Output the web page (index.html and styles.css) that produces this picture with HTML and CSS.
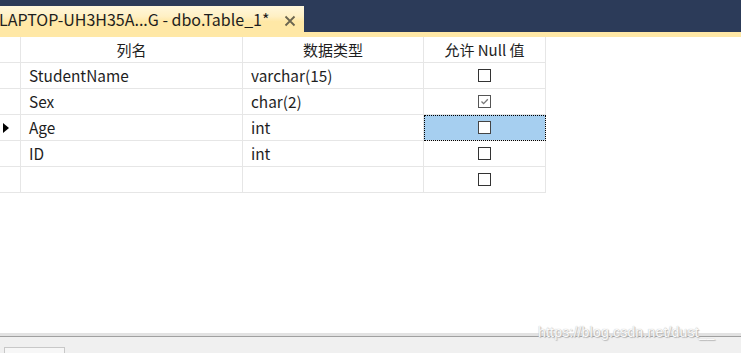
FILE: index.html
```html
<!DOCTYPE html>
<html>
<head>
<meta charset="utf-8">
<link rel="stylesheet" href="styles.css">
</head>
<body>
<div class="app">
  <div class="topbar">
    <div class="tab">
      <span class="tab-title">LAPTOP-UH3H35A...G - dbo.Table_1*</span>
      <svg class="close" width="12" height="12" viewBox="0 0 12 12"><path d="M1.5 1.5 L10.5 10.5 M10.5 1.5 L1.5 10.5" stroke="#6b6550" stroke-width="1.8" fill="none"/></svg>
    </div>
  </div>
  <div class="strip"></div>
  <div class="content">
    <div class="grid">
      <div class="rh hdr"></div><div class="c hdr name">列名</div><div class="c hdr type">数据类型</div><div class="c hdr nul">允许 Null 值</div>
      <div class="rh"></div><div class="c">StudentName</div><div class="c">varchar(15)</div><div class="c chk"><span class="box"></span></div>
      <div class="rh"></div><div class="c">Sex</div><div class="c">char(2)</div><div class="c chk"><span class="box checked"><svg width="11" height="11" viewBox="0 0 11 11"><path d="M2.5 5.5 L4.6 7.6 L8.8 3.2" stroke="#777" stroke-width="1.3" fill="none"/></svg></span></div>
      <div class="rh cur"><span class="arrow"></span></div><div class="c">Age</div><div class="c">int</div><div class="c chk sel"><span class="box"></span></div>
      <div class="rh"></div><div class="c">ID</div><div class="c">int</div><div class="c chk"><span class="box"></span></div>
      <div class="rh"></div><div class="c"></div><div class="c"></div><div class="c chk"><span class="box"></span></div>
    </div>
  </div>
  <div class="bottom">
    <div class="btab"></div>
    <span class="watermark">https://blog.csdn.net/dust__</span>
  </div>
</div>
</body>
</html>
```
FILE: styles.css
```css
* { box-sizing: border-box; }
html, body { margin: 0; padding: 0; }
body { width: 741px; height: 353px; overflow: hidden; background: #fff; font-family: "Noto Sans CJK SC", "Noto Sans", sans-serif; color: #1e1e1e; }
.app { display: flex; flex-direction: column; height: 353px; }
.topbar { height: 32px; background: #2c3b59; display: flex; align-items: flex-end; }
.tab { width: 304px; height: 26px; background: linear-gradient(#fff7dc 0%, #fff0c4 40%, #ffe8a6 60%, #ffe8a6 100%); display: flex; align-items: center; padding-left: 0; }
.tab-title { font-size: 16px; color: #1e1e1e; white-space: nowrap; line-height: 26px; margin-left: -1px; }
.close { margin-left: auto; margin-right: 8px; margin-top: 3px; }
.strip { height: 5px; background: #ffe8a6; }
.content { flex: 1; }
.grid { display: grid; grid-template-columns: 21px 222px 181px 122px; grid-template-rows: repeat(6, 26px); width: 546px; }
.rh { border-right: 1px solid #e6e6e6; border-bottom: 1px solid #e6e6e6; display: flex; align-items: center; }
.c { border-right: 1px solid #e6e6e6; border-bottom: 1px solid #e6e6e6; font-size: 15.4px; line-height: 25px; padding-left: 8px; white-space: nowrap; }
.c.hdr { text-align: center; padding-left: 0; font-size: 15px; }
.chk { display: flex; align-items: center; justify-content: center; padding-left: 0; }
.box { width: 13px; height: 13px; border: 1px solid #333; background: #fff; display: flex; align-items: center; justify-content: center; }
.box.checked { border-color: #555; }
.sel { background: #a6cff0; outline: 1px dotted #000; outline-offset: -1px; }
.sel .box { border-color: #444; }
.cur { padding-left: 3px; }
.cur .arrow { display: block; width: 0; height: 0; border-top: 5px solid transparent; border-bottom: 5px solid transparent; border-left: 6px solid #000; }
.bottom { height: 20px; position: relative; background: #f0f0f0; border-top: 3px solid #e2e2e2; box-shadow: inset 0 1px 0 #a0a0a0; }
.btab { position: absolute; left: 4px; top: 11px; width: 61px; height: 10px; border: 1px solid #c8c8c8; border-bottom: none; background: #f7f7f7; }
.watermark { position: absolute; left: 538px; top: -12px; font-family: "Liberation Sans", Arial, sans-serif; font-size: 14px; color: #fafafa; text-shadow: 0 0 1px #aaa, 1px 1px 1px #bbb; letter-spacing: 0.2px; }
```
